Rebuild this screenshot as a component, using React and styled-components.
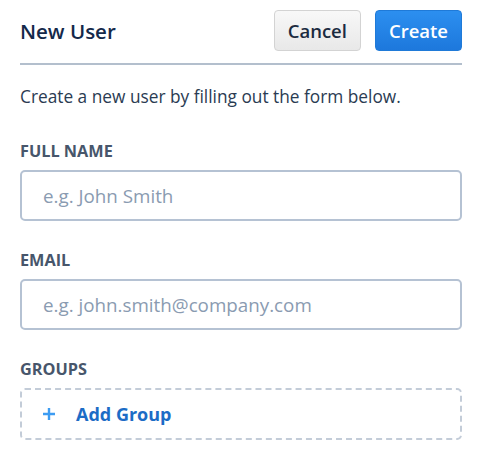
import React from "react";
import styled, { createGlobalStyle } from "styled-components";

const GlobalStyle = createGlobalStyle`
  html, body {
    margin: 0;
    padding: 0;
    background: #ffffff;
  }
  body {
    font-family: "Open Sans", "Noto Sans", sans-serif;
    color: #1e2f45;
  }
  * {
    box-sizing: border-box;
  }
`;

const Page = styled.div`
  width: 480px;
  padding: 10px 18px 0 20px;
`;

const Header = styled.div`
  display: flex;
  align-items: center;
  justify-content: space-between;
  padding-bottom: 12px;
  border-bottom: 2px solid #b3bfcd;
`;

const Title = styled.h1`
  margin: 0;
  font-size: 20.5px;
  font-weight: 600;
  color: #14294a;
`;

const Actions = styled.div`
  display: flex;
  gap: 14px;
`;

const Button = styled.button`
  height: 41px;
  padding: 0 13px;
  border-radius: 4px;
  font-family: inherit;
  font-size: 18.5px;
  font-weight: 600;
  cursor: pointer;
  border: 1px solid ${(p) => (p.primary ? "#1f7ad8" : "#d3d3d3")};
  color: ${(p) => (p.primary ? "#ffffff" : "#1b2b40")};
  background: ${(p) =>
    p.primary
      ? "linear-gradient(#2c8ff0, #1d78dc)"
      : "linear-gradient(#f8f8f8, #e8e8e8)"};
`;

const Intro = styled.p`
  margin: 20px 0 0;
  font-size: 17.3px;
  line-height: 24px;
  color: #2a3b52;
`;

const Field = styled.div`
  margin-top: ${(p) => p.gap || 28}px;
`;

const Label = styled.div`
  font-size: 16.3px;
  line-height: 22px;
  font-weight: 700;
  color: #47566b;
  margin-bottom: 8px;
`;

const Input = styled.input`
  display: block;
  width: 100%;
  height: 51px;
  padding: 0 21px;
  border: 2px solid #b5c2d3;
  border-radius: 5px;
  font-family: inherit;
  font-size: 18.8px;
  color: #1e2f45;
  outline: none;

  &::placeholder {
    color: #8a9bb1;
  }
`;

const AddGroup = styled.button`
  display: flex;
  align-items: center;
  gap: 20px;
  width: 100%;
  height: 52px;
  padding: 0 20px;
  border: 2px dashed #c3ccd8;
  border-radius: 5px;
  background: transparent;
  font-family: inherit;
  font-size: 18px;
  font-weight: 700;
  color: #1c6cc6;
  cursor: pointer;
`;

const PlusIcon = () => (
  <svg width="14" height="14" viewBox="0 0 14 14">
    <path
      d="M7 1v12M1 7h12"
      stroke="#3d9cf2"
      strokeWidth="2.4"
      fill="none"
    />
  </svg>
);

export default function App() {
  return (
    <Page>
      <GlobalStyle />
      <Header>
        <Title>New User</Title>
        <Actions>
          <Button>Cancel</Button>
          <Button primary>Create</Button>
        </Actions>
      </Header>
      <Intro>Create a new user by filling out the form below.</Intro>
      <Field gap={31}>
        <Label>FULL NAME</Label>
        <Input placeholder="e.g. John Smith" />
      </Field>
      <Field>
        <Label>EMAIL</Label>
        <Input placeholder="e.g. john.smith@company.com" />
      </Field>
      <Field>
        <Label>GROUPS</Label>
        <AddGroup>
          <PlusIcon />
          Add Group
        </AddGroup>
      </Field>
    </Page>
  );
}
